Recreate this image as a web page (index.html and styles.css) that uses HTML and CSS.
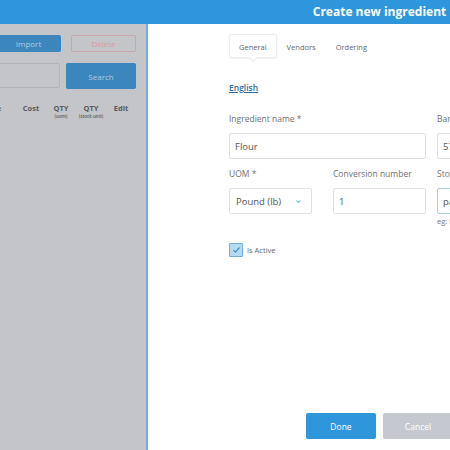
FILE: index.html
```html
<!DOCTYPE html>
<html lang="en">
<head>
    <meta charset="UTF-8">
    <meta name="viewport" content="width=device-width, initial-scale=1.0">
    <title>Create new ingredient</title>
    <link rel="stylesheet" href="styles.css">
</head>
<body>
    <!-- Ingredient list, dimmed behind the drawer -->
    <aside class="sidebar">
        <div class="bar"></div>
        <div class="sidebar-body">
            <div class="row">
                <button class="btn-import">Import</button>
                <button class="btn-delete">Delete</button>
            </div>
            <div class="row">
                <input type="text" class="search-input">
                <button class="btn-search">Search</button>
            </div>
            <div class="row table-head">
                <div class="col col-name">Name</div>
                <div class="col">Cost</div>
                <div class="col">QTY<small>(uom)</small></div>
                <div class="col">QTY<small>(stock unit)</small></div>
                <div class="col">Edit</div>
            </div>
        </div>
    </aside>

    <!-- Create ingredient drawer -->
    <section class="drawer">
        <div class="bar drawer-title">Create new ingredient</div>
        <div class="drawer-body">
            <div class="tabs">
                <span class="tab active">General</span>
                <span class="tab">Vendors</span>
                <span class="tab">Ordering</span>
            </div>

            <a href="#" class="lang">English</a>

            <div class="form-grid">
                <div class="field wide">
                    <label>Ingredient name *</label>
                    <input type="text" value="Flour">
                </div>
                <div class="field">
                    <label>Barcode</label>
                    <input type="text" value="5712345">
                </div>

                <div class="field">
                    <label>UOM *</label>
                    <div class="select">
                        Pound (lb)
                        <svg width="7" height="5" viewBox="0 0 7 5"><path d="M1.5 1.5 3.5 3.4 5.5 1.5" fill="none" stroke="#7cc2e0" stroke-width="1.1"/></svg>
                    </div>
                </div>
                <div class="field">
                    <label>Conversion number</label>
                    <input type="text" value="1">
                </div>
                <div class="field">
                    <label>Stock unit</label>
                    <input type="text" class="focus" value="pack">
                    <span class="hint">eg: bag, box</span>
                </div>
            </div>

            <label class="check">
                <span class="box">
                    <svg width="9" height="8" viewBox="0 0 9 8"><path d="M1.5 4.2 3.5 6.2 7.5 1.5" fill="none" stroke="#3d8fcf" stroke-width="1.2"/></svg>
                </span>
                Is Active
            </label>

            <div class="actions">
                <button class="btn-done">Done</button>
                <button class="btn-cancel">Cancel</button>
            </div>
        </div>
    </section>
</body>
</html>
```

FILE: styles.css
```css
body {
    margin: 0;
    font-family: "Open Sans", "Liberation Sans", sans-serif;
    display: flex;
    height: 450px;
    overflow: hidden;
    background-color: #fff;
}

.bar {
    height: 24px;
    background-color: #2e96da;
    flex-shrink: 0;
}

/* Left side list */
.sidebar {
    width: 148px;
    flex-shrink: 0;
    display: flex;
    flex-direction: column;
    overflow: hidden;
}

.sidebar-body {
    flex: 1;
    background-color: #c4c5c8;
    border-right: 2px solid #70aedb;
    padding: 11px 10px 0 0;
}

.row {
    display: flex;
    justify-content: flex-end;
    gap: 10px;
    margin-bottom: 11px;
}

.row button {
    flex-shrink: 0;
    font-family: inherit;
    font-size: 8px;
    border-radius: 2px;
    cursor: pointer;
}

.btn-import {
    width: 65px;
    height: 17px;
    background-color: #3a86bd;
    color: #b4cde2;
    border: none;
}

.btn-delete {
    width: 65px;
    height: 17px;
    background: transparent;
    border: 1px solid #c9a6a8;
    color: #d69b9e;
}

.search-input {
    flex-shrink: 0;
    width: 120px;
    height: 25px;
    box-sizing: border-box;
    background-color: #c4c5c8;
    border: 1px solid #b3b4b7;
    border-radius: 2px;
    margin-right: -4px;
}

.btn-search {
    width: 70px;
    height: 26px;
    background-color: #3a86bd;
    color: #b4cde2;
    border: none;
}

.table-head {
    gap: 0;
    margin-top: 14px;
}

.col {
    flex-shrink: 0;
    width: 30px;
    text-align: center;
    font-size: 7.5px;
    font-weight: bold;
    color: #555a60;
    line-height: 10px;
}

.col-name {
    width: 52px;
}

.col small {
    display: block;
    font-size: 4.5px;
    font-weight: 600;
    line-height: 6px;
}

/* Drawer */
.drawer {
    width: 463px;
    flex-shrink: 0;
    display: flex;
    flex-direction: column;
}

.drawer-title {
    color: #fff;
    font-weight: bold;
    font-size: 12px;
    text-align: center;
    line-height: 24px;
}

.drawer-body {
    flex: 1;
    display: flex;
    flex-direction: column;
    padding: 10px 81px 11px;
}

.tabs {
    display: flex;
}

.tab {
    height: 24px;
    line-height: 24px;
    padding: 0 9px;
    font-size: 7.5px;
    color: #666;
    position: relative;
    border: 1px solid transparent;
    box-sizing: border-box;
}

.tab.active {
    border-color: #ececec;
    border-radius: 2px;
    box-shadow: 0 1px 2px rgba(0, 0, 0, 0.06);
}

.tab.active::after {
    content: "";
    position: absolute;
    left: 50%;
    bottom: -4px;
    margin-left: -3px;
    width: 5px;
    height: 5px;
    background: #fff;
    border-right: 1px solid #ececec;
    border-bottom: 1px solid #ececec;
    transform: rotate(45deg);
}

.lang {
    align-self: flex-start;
    margin-top: 24px;
    font-size: 8.5px;
    font-weight: 600;
    color: #2c6c9c;
}

.form-grid {
    display: grid;
    grid-template-columns: 93px 93px 93px;
    column-gap: 11px;
    row-gap: 9px;
    margin-top: 20px;
}

.field {
    display: flex;
    flex-direction: column;
}

.field.wide {
    grid-column: span 2;
}

.field label {
    font-size: 8.5px;
    color: #707070;
    line-height: 12px;
    margin-bottom: 8px;
}

.field input,
.select {
    height: 26px;
    box-sizing: border-box;
    border: 1px solid #e0e0e0;
    border-radius: 2px;
    padding: 0 5px;
    font-family: inherit;
    font-size: 9.5px;
    color: #555;
}

.field input.focus {
    border-color: #a8d0d8;
}

.select {
    width: 83px;
    display: flex;
    align-items: center;
    justify-content: space-between;
    padding: 0 9px 0 6px;
}

.hint {
    font-size: 7.5px;
    color: #777;
    margin-top: 2px;
}

.check {
    display: flex;
    align-items: center;
    gap: 4px;
    margin-top: 17px;
    font-size: 7.5px;
    color: #666;
}

.box {
    width: 12px;
    height: 12px;
    background-color: #b7daf3;
    border: 1px solid #74addb;
    border-radius: 1px;
    display: flex;
    align-items: center;
    justify-content: center;
}

.actions {
    margin-top: auto;
    display: flex;
    justify-content: center;
    gap: 7px;
}

.actions button {
    width: 70px;
    height: 26px;
    border: none;
    border-radius: 2px;
    font-family: inherit;
    font-size: 8.5px;
    color: #fff;
    cursor: pointer;
}

.btn-done {
    background-color: #2e96da;
}

.btn-cancel {
    background-color: #c5c9cf;
}
```
